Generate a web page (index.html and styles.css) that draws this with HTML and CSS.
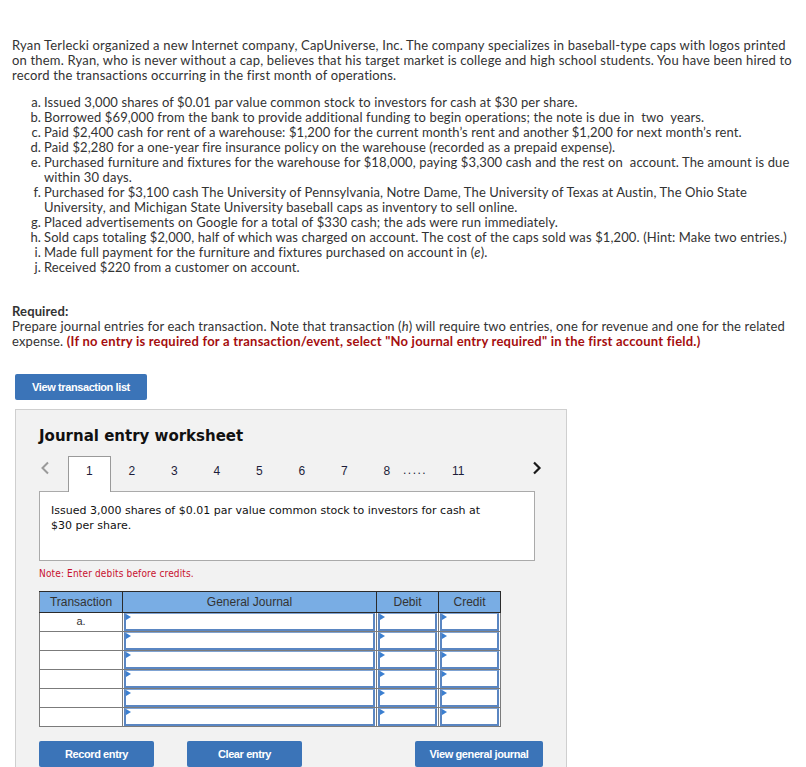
FILE: index.html
```html
<!DOCTYPE html>
<html lang="en">
<head>
<meta charset="utf-8">
<title>Journal entry worksheet</title>
<link rel="stylesheet" href="styles.css">
</head>
<body>
<div class="page">
  <p class="intro">Ryan Terlecki organized a new Internet company, CapUniverse, Inc. The company specializes in baseball-type caps with logos printed on them. Ryan, who is never without a cap, believes that his target market is college and high school students. You have been hired to record the transactions occurring in the first month of operations.</p>

  <ol class="tx">
    <li><span class="mk">a.</span><span>Issued 3,000 shares of $0.01 par value common stock to investors for cash at $30 per share.</span></li>
    <li><span class="mk">b.</span><span>Borrowed $69,000 from the bank to provide additional funding to begin operations; the note is due in &nbsp;two &nbsp;years.</span></li>
    <li><span class="mk">c.</span><span>Paid $2,400 cash for rent of a warehouse: $1,200 for the current month’s rent and another $1,200 for next month’s rent.</span></li>
    <li><span class="mk">d.</span><span>Paid $2,280 for a one-year fire insurance policy on the warehouse (recorded as a prepaid expense).</span></li>
    <li><span class="mk">e.</span><span>Purchased furniture and fixtures for the warehouse for $18,000, paying $3,300 cash and the rest on &nbsp;account. The amount is due within 30 days.</span></li>
    <li><span class="mk">f.</span><span>Purchased for $3,100 cash The University of Pennsylvania, Notre Dame, The University of Texas at Austin, The Ohio State University, and Michigan State University baseball caps as inventory to sell online.</span></li>
    <li><span class="mk">g.</span><span>Placed advertisements on Google for a total of $330 cash; the ads were run immediately.</span></li>
    <li><span class="mk">h.</span><span>Sold caps totaling $2,000, half of which was charged on account. The cost of the caps sold was $1,200. (Hint: Make two entries.)</span></li>
    <li><span class="mk">i.</span><span>Made full payment for the furniture and fixtures purchased on account in (<em>e</em>).</span></li>
    <li><span class="mk">j.</span><span>Received $220 from a customer on account.</span></li>
  </ol>

  <div class="required">
    <p class="req-title">Required:</p>
    <p>Prepare journal entries for each transaction. Note that transaction (<em>h</em>) will require two entries, one for revenue and one for the related expense. <strong class="warn">(If no entry is required for a transaction/event, select "No journal entry required" in the first account field.)</strong></p>
  </div>

  <button class="btn btn-list" type="button">View transaction list</button>

  <section class="worksheet">
    <h2 class="ws-title">Journal entry worksheet</h2>

    <div class="tabs">
      <span class="arrow prev"><svg width="10" height="14" viewBox="0 0 10 14"><polyline points="8,1.5 2.5,7 8,12.5" fill="none" stroke="#9a9a9a" stroke-width="2"/></svg></span>
      <span class="tab active">1</span>
      <span class="tab">2</span>
      <span class="tab">3</span>
      <span class="tab">4</span>
      <span class="tab">5</span>
      <span class="tab">6</span>
      <span class="tab">7</span>
      <span class="tab">8</span>
      <span class="dots">.....</span>
      <span class="tab">11</span>
      <span class="arrow next"><svg width="10" height="14" viewBox="0 0 10 14"><polyline points="2,1.5 7.5,7 2,12.5" fill="none" stroke="#1a1a1a" stroke-width="2.2"/></svg></span>
    </div>

    <div class="desc">Issued 3,000 shares of $0.01 par value common stock to investors for cash at<br>$30 per share.</div>

    <p class="note">Note: Enter debits before credits.</p>

    <table class="journal">
      <thead>
        <tr><th class="c-tx">Transaction</th><th class="c-gj">General Journal</th><th class="c-dr">Debit</th><th class="c-cr">Credit</th></tr>
      </thead>
      <tbody>
        <tr><td class="tx-cell">a.</td><td class="in"><div class="field"></div></td><td class="in"><div class="field"></div></td><td class="in"><div class="field"></div></td></tr>
        <tr><td class="tx-cell"></td><td class="in"><div class="field"></div></td><td class="in"><div class="field"></div></td><td class="in"><div class="field"></div></td></tr>
        <tr><td class="tx-cell"></td><td class="in"><div class="field"></div></td><td class="in"><div class="field"></div></td><td class="in"><div class="field"></div></td></tr>
        <tr><td class="tx-cell"></td><td class="in"><div class="field"></div></td><td class="in"><div class="field"></div></td><td class="in"><div class="field"></div></td></tr>
        <tr><td class="tx-cell"></td><td class="in"><div class="field"></div></td><td class="in"><div class="field"></div></td><td class="in"><div class="field"></div></td></tr>
        <tr><td class="tx-cell"></td><td class="in"><div class="field"></div></td><td class="in"><div class="field"></div></td><td class="in"><div class="field"></div></td></tr>
      </tbody>
    </table>

    <div class="actions">
      <button class="btn btn-act" type="button">Record entry</button>
      <button class="btn btn-act" type="button">Clear entry</button>
      <button class="btn btn-act btn-wide" type="button">View general journal</button>
    </div>
  </section>
</div>
</body>
</html>
```
FILE: styles.css
```css
html, body {
  margin: 0;
  padding: 0;
  background: #ffffff;
}

.page {
  padding: 38px 12px 0 12px;
  font-family: "Lato", "Liberation Sans", sans-serif;
  font-size: 13px;
  line-height: 15px;
  color: #333333;
}

p { margin: 0; }

.intro {
  letter-spacing: 0.18px;
}

.tx {
  list-style: none;
  margin: 12px 0 0 0;
  padding: 0 0 0 18px;
  letter-spacing: 0.12px;
}

.tx li {
  display: grid;
  grid-template-columns: 11px 1fr;
  column-gap: 3px;
}

.tx .mk {
  text-align: right;
}

.required {
  margin-top: 29px;
  letter-spacing: 0.13px;
}

.req-title {
  font-weight: 700;
}

.warn {
  color: #a50e0e;
  font-weight: 700;
  letter-spacing: 0.22px;
}

.btn {
  display: block;
  border: 0;
  border-radius: 2px;
  background: #3b74b8;
  color: #ffffff;
  font-family: "Liberation Sans", Arial, sans-serif;
  font-weight: 700;
  font-size: 11px;
  letter-spacing: -0.4px;
  padding: 0;
  cursor: pointer;
}

.btn-list {
  margin: 25px 0 0 3px;
  width: 132px;
  height: 26px;
}

.worksheet {
  margin: 9px 0 0 3px;
  width: 552px;
  box-sizing: border-box;
  background: #f2f2f2;
  border: 1px solid #cfcfcf;
  padding: 16px 23px 30px 23px;
  font-family: "DejaVu Sans", sans-serif;
  color: #111111;
}

.ws-title {
  margin: 0;
  font-size: 15px;
  line-height: 20px;
  font-weight: 700;
  color: #111111;
}

.tabs {
  display: flex;
  align-items: flex-start;
  margin-top: 10px;
  width: 506px;
  font-family: "Liberation Sans", Arial, sans-serif;
  font-size: 12px;
  color: #1d1d3a;
}

.arrow {
  display: flex;
  height: 24px;
  align-items: center;
}

.arrow.prev {
  width: 29px;
  padding-left: 1px;
  box-sizing: border-box;
}

.arrow.next {
  margin-left: auto;
  padding-right: 3px;
}

.tab {
  width: 42.5px;
  height: 35px;
  box-sizing: border-box;
  text-align: center;
  padding-top: 6px;
  line-height: 16px;
  border: 1px solid transparent;
  border-bottom: 0;
}

.tab.active {
  background: #ffffff;
  border-color: #9a9a9a;
  position: relative;
  z-index: 1;
  margin-bottom: -1px;
  height: 36px;
}

.dots {
  width: 34px;
  margin-left: -5px;
  padding-top: 6px;
  line-height: 16px;
  letter-spacing: 1.5px;
}

.desc {
  width: 496px;
  height: 70px;
  box-sizing: border-box;
  background: #ffffff;
  border: 1px solid #aaaaaa;
  padding: 11px 11px;
  font-size: 11px;
  line-height: 15px;
  color: #111111;
}

.note {
  margin-top: 6px;
  font-family: "DejaVu Sans Condensed", "DejaVu Sans", sans-serif;
  font-size: 10px;
  line-height: 14px;
  letter-spacing: 0.15px;
  color: #c8102e;
}

.journal {
  margin-top: 10px;
  width: 461px;
  border-collapse: collapse;
  table-layout: fixed;
  font-family: "Liberation Sans", Arial, sans-serif;
  font-size: 12px;
  color: #333333;
}

.journal th {
  background: #79ade4;
  border: 1px solid #2b2b2b;
  height: 20px;
  padding: 0;
  font-weight: 400;
  text-align: center;
}

.journal th.c-tx { width: 82px; border-left-color: #777777; }
.journal th.c-gj { width: 253px; }
.journal th.c-dr { width: 61px; }
.journal th.c-cr { width: 61px; }

.journal td {
  padding: 0;
  border: 1px solid #7b7b7b;
  background: #ffffff;
}

.journal td.tx-cell {
  height: 18px;
  text-align: center;
  font-size: 11px;
  vertical-align: top;
  line-height: 17px;
}

.journal td.in {
  padding: 0 1px;
  vertical-align: top;
}

.field {
  position: relative;
  box-sizing: border-box;
  height: 18px;
  background: #ffffff;
  border: 2px solid #5a86c2;
  border-top: 1px solid #7fa3d3;
}

.field::before {
  content: "";
  position: absolute;
  left: 0;
  top: 0;
  border-left: 5px solid #3b7fd0;
  border-top: 3px solid transparent;
  border-bottom: 3px solid transparent;
}

.actions {
  display: flex;
  gap: 33px;
  margin-top: 14px;
  width: 504px;
}

.btn-act {
  width: 115px;
  height: 26px;
}

.btn-wide {
  width: 128px;
  margin-left: auto;
}
```
